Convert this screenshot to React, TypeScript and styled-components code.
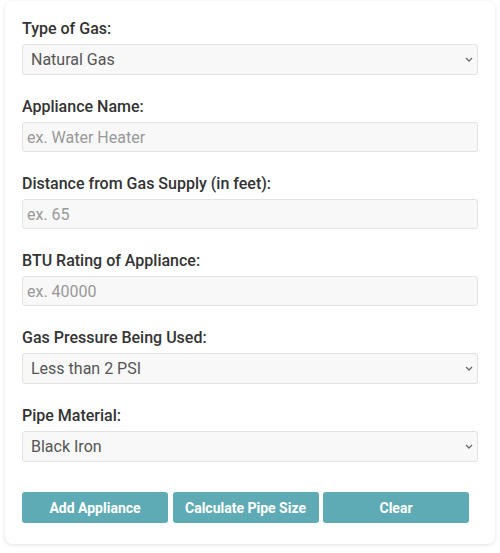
import styled, { createGlobalStyle } from "styled-components";

import type { FC } from "react";

const GlobalStyle = createGlobalStyle`
  html, body {
    margin: 0;
    padding: 0;
    background: #ffffff;
    font-family: Roboto, "Liberation Sans", Arial, sans-serif;
  }
`;

type Field = {
  label: string;
  kind: "select" | "input";
  options?: string[];
  placeholder?: string;
};

const fields: Field[] = [
  { label: "Type of Gas:", kind: "select", options: ["Natural Gas", "Propane"] },
  { label: "Appliance Name:", kind: "input", placeholder: "ex. Water Heater" },
  { label: "Distance from Gas Supply (in feet):", kind: "input", placeholder: "ex. 65" },
  { label: "BTU Rating of Appliance:", kind: "input", placeholder: "ex. 40000" },
  { label: "Gas Pressure Being Used:", kind: "select", options: ["Less than 2 PSI", "2 PSI"] },
  { label: "Pipe Material:", kind: "select", options: ["Black Iron", "CSST", "Copper"] },
];

const Chevron: FC = () => (
  <ChevronIcon width="8" height="5" viewBox="0 0 8 5" aria-hidden="true">
    <path d="M1 1 L4 4 L7 1" fill="none" stroke="#6b6b6b" strokeWidth="1.3" />
  </ChevronIcon>
);

const App: FC = () => {
  return (
    <Page>
      <GlobalStyle />
      <Card>
        {fields.map((f) => (
          <FieldGroup key={f.label}>
            <Label>{f.label}</Label>
            {f.kind === "select" ? (
              <SelectWrap>
                <Select defaultValue={f.options?.[0]}>
                  {f.options?.map((o) => (
                    <option key={o}>{o}</option>
                  ))}
                </Select>
                <Chevron />
              </SelectWrap>
            ) : (
              <Input type="text" placeholder={f.placeholder} />
            )}
          </FieldGroup>
        ))}
        <ButtonRow>
          <ActionButton>Add Appliance</ActionButton>
          <ActionButton>Calculate Pipe Size</ActionButton>
          <ActionButton>Clear</ActionButton>
        </ButtonRow>
      </Card>
    </Page>
  );
};

export default App;

const Page = styled.div`
  padding: 1px 5px 8px;
`;

const Card = styled.div`
  width: 490px;
  box-sizing: border-box;
  padding: 17px 17px 21px;
  background: #ffffff;
  border-radius: 8px;
  box-shadow: 0 1px 4px rgba(0, 0, 0, 0.12);
`;

const FieldGroup = styled.div`
  display: flex;
  flex-direction: column;
  margin-bottom: 21px;
`;

const Label = styled.label`
  font-size: 16px;
  font-weight: 500;
  line-height: 22px;
  color: #333333;
  margin-bottom: 4px;
`;

const controlBase = `
  box-sizing: border-box;
  width: 100%;
  height: 30px;
  margin: 0;
  font-family: Roboto, "Liberation Sans", Arial, sans-serif;
  font-size: 16px;
  color: #555555;
  background: #f8f8f8;
  border: 1px solid #e2e2e2;
  border-radius: 3px;
  outline: none;
`;

const SelectWrap = styled.div`
  position: relative;
`;

const Select = styled.select`
  ${controlBase};
  display: block;
  height: 31px;
  padding: 0 20px 0 8px;
  appearance: none;
  -webkit-appearance: none;
`;

const ChevronIcon = styled.svg`
  position: absolute;
  right: 5px;
  top: 13px;
  pointer-events: none;
`;

const Input = styled.input`
  ${controlBase};
  height: 30px;
  padding: 0 4px;

  &::placeholder {
    color: #999999;
  }
`;

const ButtonRow = styled.div`
  display: flex;
  gap: 4.5px;
  margin-top: 30px;
`;

const ActionButton = styled.button`
  width: 146px;
  height: 31px;
  padding: 0;
  border: none;
  border-radius: 3px;
  background: #5fabb5;
  color: #ffffff;
  font-family: Roboto, "Liberation Sans", Arial, sans-serif;
  font-size: 14px;
  font-weight: 700;
  cursor: pointer;
`;
